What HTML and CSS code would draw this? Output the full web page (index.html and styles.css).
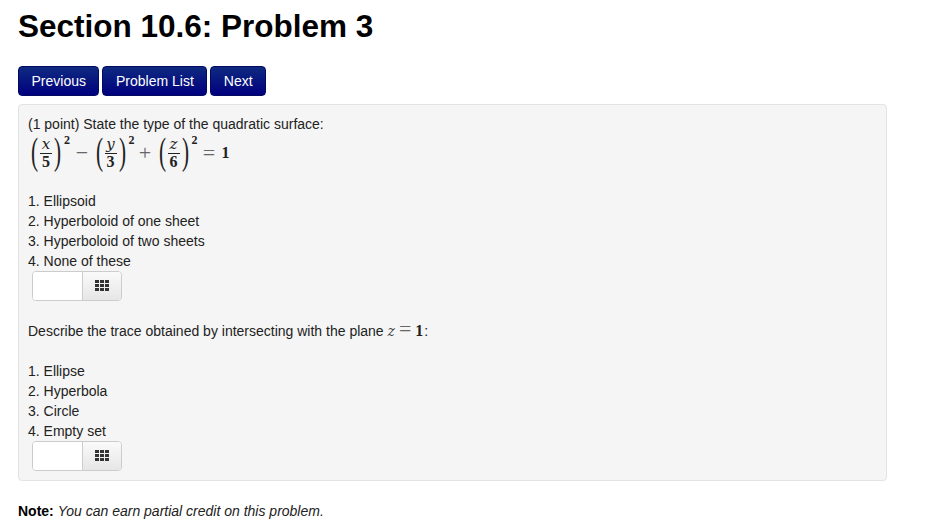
FILE: index.html
```html
<!DOCTYPE html>
<html lang="en">
<head>
<meta charset="utf-8">
<title>Section 10.6: Problem 3</title>
<link rel="stylesheet" href="styles.css">
</head>
<body>
<h1 class="title">Section 10.6: Problem 3</h1>
<nav class="nav">
  <a class="btn" href="#">Previous</a>
  <a class="btn" href="#">Problem List</a>
  <a class="btn" href="#">Next</a>
</nav>
<main class="well">
  <div>(1 point) State the type of the quadratic surface:</div>
  <div class="eq">
    <span class="paren">(</span><span class="frac"><i class="num">x</i><b class="den">5</b></span><span class="paren">)</span><sup class="pow">2</sup><span class="op minus">−</span>
    <span class="paren">(</span><span class="frac"><i class="num">y</i><b class="den">3</b></span><span class="paren">)</span><sup class="pow">2</sup><span class="op plus">+</span>
    <span class="paren">(</span><span class="frac"><i class="num">z</i><b class="den">6</b></span><span class="paren">)</span><sup class="pow">2</sup><span class="op eqs">=</span><b class="one">1</b>
  </div>
  <ol class="choices">
    <li>1. Ellipsoid</li>
    <li>2. Hyperboloid of one sheet</li>
    <li>3. Hyperboloid of two sheets</li>
    <li>4. None of these</li>
  </ol>
  <div class="picker">
    <span class="field"></span>
    <span class="addon">
      <svg class="grid" width="14" height="12" viewBox="0 0 14 12"><path fill="#333" d="M0 0h4v3H0zM5 0h4v3H5zM10 0h4v3h-4zM0 4h4v3H0zM5 4h4v3H5zM10 4h4v3h-4zM0 8h4v3H0zM5 8h4v3H5zM10 8h4v3h-4z"/></svg>
    </span>
  </div>
  <div class="second">Describe the trace obtained by intersecting with the plane <i class="mvar">z</i><span class="mop">=</span><b class="mnum">1</b>:</div>
  <ol class="choices">
    <li>1. Ellipse</li>
    <li>2. Hyperbola</li>
    <li>3. Circle</li>
    <li>4. Empty set</li>
  </ol>
  <div class="picker">
    <span class="field"></span>
    <span class="addon">
      <svg class="grid" width="14" height="12" viewBox="0 0 14 12"><path fill="#333" d="M0 0h4v3H0zM5 0h4v3H5zM10 0h4v3h-4zM0 4h4v3H0zM5 4h4v3H5zM10 4h4v3h-4zM0 8h4v3H0zM5 8h4v3H5zM10 8h4v3h-4z"/></svg>
    </span>
  </div>
</main>
<p class="note"><b>Note:</b> <em>You can earn partial credit on this problem.</em></p>
</body>
</html>
```
FILE: styles.css
```css
* { box-sizing: border-box; }
html, body { margin: 0; padding: 0; }
body {
  padding: 0 18px;
  background: #fff;
  color: #222;
  font: 14px/20px "Liberation Sans", Arial, sans-serif;
  overflow: hidden;
  height: 525px;
}
.title {
  margin: 0;
  padding-top: 6px;
  height: 66px;
  color: #000;
  font-size: 31.5px;
  line-height: 40px;
  font-weight: 700;
}
.nav { display: flex; gap: 3px; height: 30px; }
.btn {
  display: flex;
  align-items: center;
  padding: 0 12.5px;
  border: 1px solid #000a60;
  border-radius: 4px;
  background: linear-gradient(#0f2a80, #00007f);
  color: #fff;
  text-decoration: none;
}
.well {
  width: 869px;
  height: 377px;
  margin-top: 8px;
  padding: 9px 9px 0;
  background: #f5f5f5;
  border: 1px solid #e3e3e3;
  border-radius: 4px;
}
.eq {
  display: flex;
  align-items: center;
  height: 38px;
  padding-left: 1px;
  font-family: "Liberation Serif", serif;
  color: #222;
}
.paren {
  flex: none;
  width: 11px;
  font-size: 17px;
  line-height: 18px;
  text-align: center;
  transform: scale(1.25, 2.2);
}
.frac {
  display: inline-flex;
  flex: none;
  flex-direction: column;
  align-items: center;
  width: 12px;
  line-height: 16px;
}
.num {
  font-family: "DejaVu Serif", serif;
  font-size: 15px;
  border-bottom: 1px solid #222;
  width: 100%;
  text-align: center;
  padding-bottom: 1px;
}
.den { font-size: 16px; font-weight: 700; }
.pow {
  flex: none;
  align-self: flex-start;
  width: 6px;
  margin-top: 1px;
  margin-left: 1px;
  font-size: 12px;
  line-height: 11px;
  font-weight: 700;
}
.op { flex: none; font-size: 22px; line-height: 20px; color: #666; width: 18px; text-align: center; }
.minus { margin-left: 3px; margin-right: 2.5px; }
.plus { margin-left: 1.5px; margin-right: 2.5px; }
.eqs { margin-left: 2.5px; margin-right: 3.5px; }
.one { font-size: 16px; }
.choices { list-style: none; margin: 19px 0 0; padding: 0; }
.picker {
  display: flex;
  width: 90px;
  height: 30px;
  margin: 0 0 0 4px;
  border: 1px solid #ccc;
  border-radius: 4px;
  overflow: hidden;
  background: #fff;
}
.field { width: 49px; background: #fff; }
.addon {
  flex: 1;
  display: flex;
  align-items: center;
  justify-content: center;
  border-left: 1px solid #ccc;
  background: linear-gradient(#fafafa, #e6e6e6);
}
.grid { display: block; }
.second { height: 20px; margin-top: 20px; }
.second + .choices { margin-top: 20px; }
.mvar, .mop, .mnum { font-family: "Liberation Serif", serif; line-height: 0; }
.mvar { font-family: "DejaVu Serif", serif; font-size: 14px; color: #444; }
.mop { font-size: 22px; color: #666; margin: 0 4px; }
.mnum { font-size: 16px; font-weight: 700; margin-right: 1px; }
.note { margin: 20px 0 0; color: #222; }
.note b { color: #000; }
```
